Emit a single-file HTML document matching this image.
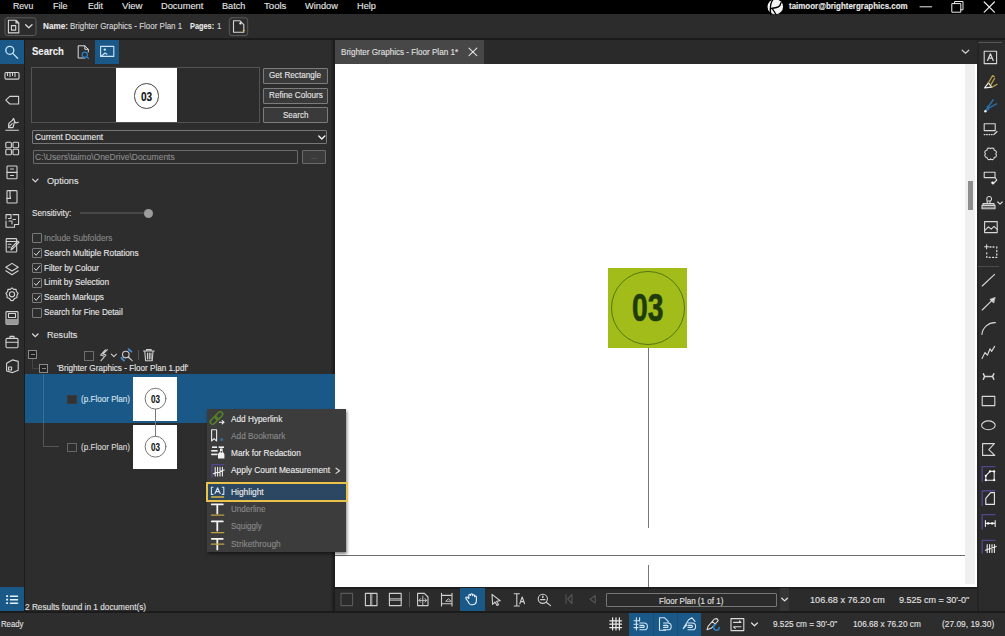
<!DOCTYPE html>
<html><head><meta charset="utf-8"><style>
html,body{margin:0;padding:0;}
body{width:1005px;height:636px;overflow:hidden;position:relative;background:#2b2b2b;font-family:"Liberation Sans", sans-serif;}
.t{position:absolute;white-space:pre;transform-origin:0 0;-webkit-text-stroke:0.12px currentColor;}
svg{overflow:visible;}
</style></head><body>
<div style="position:absolute;left:0px;top:0px;width:1005px;height:14px;background:#000;"></div>
<div style="position:absolute;left:0px;top:14px;width:1005px;height:24px;background:#2c2c2c;"></div>
<div style="position:absolute;left:0px;top:38px;width:1005px;height:2px;background:#1b1b1b;"></div>
<div style="position:absolute;left:0px;top:40px;width:24px;height:573px;background:#2b2b2b;"></div>
<div style="position:absolute;left:24px;top:40px;width:1px;height:573px;background:#1c1c1c;"></div>
<div style="position:absolute;left:25px;top:40px;width:306px;height:573px;background:#2d2d2d;"></div>
<div style="position:absolute;left:331px;top:40px;width:2px;height:573px;background:#262626;"></div>
<div style="position:absolute;left:333px;top:40px;width:2px;height:573px;background:#1d1d1d;"></div>
<div style="position:absolute;left:0px;top:40px;width:24px;height:24px;background:#1a5987;"></div>
<div style="position:absolute;left:0px;top:587px;width:24px;height:24px;background:#1a5987;"></div>
<div style="position:absolute;left:0px;top:611px;width:1005px;height:2px;background:#1b1b1b;"></div>
<div style="position:absolute;left:0px;top:613px;width:1005px;height:23px;background:#2d2d2d;"></div>
<div style="position:absolute;left:335px;top:40px;width:642px;height:24px;background:#2a2a2a;"></div>
<div style="position:absolute;left:335px;top:40px;width:149px;height:24px;background:#474747;"></div>
<div style="position:absolute;left:335px;top:64px;width:630px;height:523px;background:#ffffff;"></div>
<div style="position:absolute;left:965px;top:64px;width:10px;height:520px;background:#efefef;"></div>
<div style="position:absolute;left:975px;top:64px;width:2px;height:523px;background:#ffffff;"></div>
<div style="position:absolute;left:965px;top:584px;width:12px;height:3px;background:#ffffff;"></div>
<div style="position:absolute;left:968px;top:181px;width:5px;height:29px;background:#8e8e8e;"></div>
<div style="position:absolute;left:977px;top:40px;width:28px;height:571px;background:#2b2b2b;"></div>
<div style="position:absolute;left:977px;top:40px;width:2px;height:571px;background:#242424;"></div>
<div style="position:absolute;left:978px;top:42px;width:24px;height:1px;background:#555;"></div>
<div style="position:absolute;left:978px;top:266px;width:21px;height:1px;background:#4a4a4a;"></div>
<div style="position:absolute;left:335px;top:587px;width:642px;height:24px;background:#2b2b2b;"></div>
<div style="position:absolute;left:335px;top:587px;width:642px;height:2px;background:#1e1e1e;"></div>
<div style="position:absolute;left:460px;top:588px;width:25px;height:23px;background:#1a5987;"></div>
<div style="position:absolute;left:409px;top:592px;width:1px;height:15px;background:#555;"></div>
<div style="position:absolute;left:628.5px;top:613px;width:72px;height:23px;background:#1a5987;"></div>
<div style="position:absolute;left:653px;top:613px;width:1px;height:23px;background:#184d76;"></div>
<div style="position:absolute;left:677px;top:613px;width:1px;height:23px;background:#184d76;"></div>
<div class="t" style="left:12.5px;top:1.46px;font-size:9.5px;line-height:9.5px;font-weight:400;color:#e6e6e6;transform:scaleX(0.915);">Revu</div>
<div class="t" style="left:52.7px;top:1.46px;font-size:9.5px;line-height:9.5px;font-weight:400;color:#e6e6e6;transform:scaleX(0.953);">File</div>
<div class="t" style="left:87.6px;top:1.46px;font-size:9.5px;line-height:9.5px;font-weight:400;color:#e6e6e6;transform:scaleX(0.910);">Edit</div>
<div class="t" style="left:121.8px;top:1.46px;font-size:9.5px;line-height:9.5px;font-weight:400;color:#e6e6e6;transform:scaleX(1.004);">View</div>
<div class="t" style="left:160.7px;top:1.46px;font-size:9.5px;line-height:9.5px;font-weight:400;color:#e6e6e6;transform:scaleX(0.977);">Document</div>
<div class="t" style="left:221.6px;top:1.46px;font-size:9.5px;line-height:9.5px;font-weight:400;color:#e6e6e6;transform:scaleX(0.963);">Batch</div>
<div class="t" style="left:264.2px;top:1.46px;font-size:9.5px;line-height:9.5px;font-weight:400;color:#e6e6e6;transform:scaleX(1.010);">Tools</div>
<div class="t" style="left:305.2px;top:1.46px;font-size:9.5px;line-height:9.5px;font-weight:400;color:#e6e6e6;transform:scaleX(0.971);">Window</div>
<div class="t" style="left:357.3px;top:1.46px;font-size:9.5px;line-height:9.5px;font-weight:400;color:#e6e6e6;transform:scaleX(0.967);">Help</div>
<div class="t" style="left:789.3px;top:1.46px;font-size:9.5px;line-height:9.5px;font-weight:700;color:#ececec;transform:scaleX(0.837);">taimoor@brightergraphics.com</div>
<div class="t" style="left:42.9px;top:21.14px;font-size:9.4px;line-height:9.4px;font-weight:700;color:#e8e8e8;transform:scaleX(0.872);">Name:</div>
<div class="t" style="left:69.8px;top:21.14px;font-size:9.4px;line-height:9.4px;font-weight:400;color:#d8d8d8;transform:scaleX(0.851);">Brighter Graphics - Floor Plan 1</div>
<div class="t" style="left:190.4px;top:21.14px;font-size:9.4px;line-height:9.4px;font-weight:700;color:#e8e8e8;transform:scaleX(0.784);">Pages:</div>
<div class="t" style="left:217.0px;top:21.14px;font-size:9.4px;line-height:9.4px;font-weight:400;color:#d8d8d8;transform:scaleX(0.843);">1</div>
<div class="t" style="left:341.2px;top:46.96px;font-size:9.5px;line-height:9.5px;font-weight:400;color:#e0e0e0;transform:scaleX(0.853);">Brighter Graphics - Floor Plan 1*</div>
<div class="t" style="left:31.8px;top:47.03px;font-size:10px;line-height:10px;font-weight:700;color:#f0f0f0;transform:scaleX(0.953);">Search</div>
<div style="position:absolute;left:95px;top:40px;width:24px;height:24px;background:#1a5987;"></div>
<div style="position:absolute;left:31px;top:67px;width:229px;height:56px;background:#2c2c2c;box-sizing:border-box;border:1px solid #525252;"></div>
<div style="position:absolute;left:116px;top:68px;width:61px;height:54px;background:#ffffff;"></div>
<div style="position:absolute;left:263px;top:68px;width:65px;height:16px;background:#3a3a3a;box-sizing:border-box;border:1px solid #7c7c7c;border-radius:1px;"></div>
<div style="position:absolute;left:263px;top:88px;width:65px;height:16px;background:#3a3a3a;box-sizing:border-box;border:1px solid #7c7c7c;border-radius:1px;"></div>
<div style="position:absolute;left:263px;top:107px;width:65px;height:16px;background:#3a3a3a;box-sizing:border-box;border:1px solid #7c7c7c;border-radius:1px;"></div>
<div class="t" style="left:269.3px;top:70.34px;font-size:9.4px;line-height:9.4px;font-weight:400;color:#e6e6e6;transform:scaleX(0.869);">Get Rectangle</div>
<div class="t" style="left:268.5px;top:90.24px;font-size:9.4px;line-height:9.4px;font-weight:400;color:#e6e6e6;transform:scaleX(0.869);">Refine Colours</div>
<div class="t" style="left:282.5px;top:109.64px;font-size:9.4px;line-height:9.4px;font-weight:400;color:#e6e6e6;transform:scaleX(0.855);">Search</div>
<div style="position:absolute;left:32px;top:130px;width:295px;height:14px;background:#2e2e2e;box-sizing:border-box;border:1px solid #767676;border-radius:1px;"></div>
<div class="t" style="left:34.9px;top:132.34px;font-size:9.4px;line-height:9.4px;font-weight:400;color:#eaeaea;transform:scaleX(0.889);">Current Document</div>
<div style="position:absolute;left:33px;top:150px;width:265px;height:14px;background:#2e2e2e;box-sizing:border-box;border:1px solid #6a6a6a;border-radius:1px;"></div>
<div class="t" style="left:35.0px;top:151.84px;font-size:9.4px;line-height:9.4px;font-weight:400;color:#8c8c8c;transform:scaleX(0.906);">C:\Users\taimo\OneDrive\Documents</div>
<div style="position:absolute;left:302px;top:150px;width:24px;height:14px;background:#3b3b3b;box-sizing:border-box;border:1px solid #6a6a6a;border-radius:1px;"></div>
<div class="t" style="left:311.0px;top:152.73px;font-size:8px;line-height:8px;font-weight:400;color:#777;transform:scaleX(0.899);">...</div>
<div class="t" style="left:46.5px;top:175.87px;font-size:9.6px;line-height:9.6px;font-weight:400;color:#e0e0e0;transform:scaleX(0.952);">Options</div>
<div class="t" style="left:31.7px;top:208.24px;font-size:9.4px;line-height:9.4px;font-weight:400;color:#e4e4e4;transform:scaleX(0.877);">Sensitivity:</div>
<div style="position:absolute;left:80px;top:212px;width:67px;height:2px;background:#474747;"></div>
<div style="position:absolute;left:144px;top:209px;width:9px;height:9px;border-radius:50%;background:#9c9c9c"></div>
<div class="t" style="left:43.6px;top:232.84px;font-size:9.4px;line-height:9.4px;font-weight:400;color:#8a8a8a;transform:scaleX(0.880);">Include Subfolders</div>
<div style="position:absolute;left:32px;top:233px;width:10px;height:10px;background:transparent;box-sizing:border-box;border:1px solid #7a7a7a;border-radius:1px;"></div>
<div class="t" style="left:43.6px;top:247.84px;font-size:9.4px;line-height:9.4px;font-weight:400;color:#e8e8e8;transform:scaleX(0.886);">Search Multiple Rotations</div>
<div style="position:absolute;left:32px;top:248px;width:10px;height:10px;background:transparent;box-sizing:border-box;border:1px solid #7a7a7a;border-radius:1px;"></div>
<svg style="position:absolute;left:32px;top:248px;" width="10" height="10" viewBox="0 0 10 10" fill="none"><path d="M2.2 5.2 L4.2 7.3 L8 2.6" stroke="#dcdcdc" stroke-width="1"/></svg>
<div class="t" style="left:43.6px;top:262.74px;font-size:9.4px;line-height:9.4px;font-weight:400;color:#e8e8e8;transform:scaleX(0.865);">Filter by Colour</div>
<div style="position:absolute;left:32px;top:263px;width:10px;height:10px;background:transparent;box-sizing:border-box;border:1px solid #7a7a7a;border-radius:1px;"></div>
<svg style="position:absolute;left:32px;top:263px;" width="10" height="10" viewBox="0 0 10 10" fill="none"><path d="M2.2 5.2 L4.2 7.3 L8 2.6" stroke="#dcdcdc" stroke-width="1"/></svg>
<div class="t" style="left:43.6px;top:277.44px;font-size:9.4px;line-height:9.4px;font-weight:400;color:#e8e8e8;transform:scaleX(0.886);">Limit by Selection</div>
<div style="position:absolute;left:32px;top:278px;width:10px;height:10px;background:transparent;box-sizing:border-box;border:1px solid #7a7a7a;border-radius:1px;"></div>
<svg style="position:absolute;left:32px;top:278px;" width="10" height="10" viewBox="0 0 10 10" fill="none"><path d="M2.2 5.2 L4.2 7.3 L8 2.6" stroke="#dcdcdc" stroke-width="1"/></svg>
<div class="t" style="left:43.6px;top:292.14px;font-size:9.4px;line-height:9.4px;font-weight:400;color:#e8e8e8;transform:scaleX(0.877);">Search Markups</div>
<div style="position:absolute;left:32px;top:293px;width:10px;height:10px;background:transparent;box-sizing:border-box;border:1px solid #7a7a7a;border-radius:1px;"></div>
<svg style="position:absolute;left:32px;top:293px;" width="10" height="10" viewBox="0 0 10 10" fill="none"><path d="M2.2 5.2 L4.2 7.3 L8 2.6" stroke="#dcdcdc" stroke-width="1"/></svg>
<div class="t" style="left:43.6px;top:307.14px;font-size:9.4px;line-height:9.4px;font-weight:400;color:#e8e8e8;transform:scaleX(0.868);">Search for Fine Detail</div>
<div style="position:absolute;left:32px;top:308px;width:10px;height:10px;background:transparent;box-sizing:border-box;border:1px solid #7a7a7a;border-radius:1px;"></div>
<div class="t" style="left:46.5px;top:330.47px;font-size:9.6px;line-height:9.6px;font-weight:400;color:#e0e0e0;transform:scaleX(0.947);">Results</div>
<div style="position:absolute;left:28px;top:350px;width:9px;height:9px;background:#222;box-sizing:border-box;border:1px solid #8a8a8a;"></div>
<div style="position:absolute;left:30.5px;top:354px;width:4px;height:1px;background:#8a8a8a;"></div>
<div style="position:absolute;left:39px;top:364px;width:9px;height:9px;background:#222;box-sizing:border-box;border:1px solid #8a8a8a;"></div>
<div style="position:absolute;left:41.5px;top:368px;width:4px;height:1px;background:#8a8a8a;"></div>
<div style="position:absolute;left:32px;top:359px;width:1px;height:9px;background:#454545;"></div>
<div style="position:absolute;left:32px;top:368px;width:7px;height:1px;background:#454545;"></div>
<div style="position:absolute;left:84px;top:351px;width:10px;height:10px;background:transparent;box-sizing:border-box;border:1px solid #6e6e6e;"></div>
<div style="position:absolute;left:138px;top:350px;width:1px;height:10px;background:#555;"></div>
<div class="t" style="left:56.8px;top:362.64px;font-size:9.4px;line-height:9.4px;font-weight:400;color:#e6e6e6;transform:scaleX(0.869);">'Brighter Graphics - Floor Plan 1.pdf'</div>
<div style="position:absolute;left:25px;top:374px;width:310px;height:49px;background:#1a5987;"></div>
<div style="position:absolute;left:43px;top:374px;width:1px;height:49px;background:#3a6e96;"></div>
<div style="position:absolute;left:133px;top:377px;width:44px;height:44px;background:#ffffff;"></div>
<div style="position:absolute;left:133px;top:425px;width:44px;height:44px;background:#ffffff;"></div>
<div style="position:absolute;left:43px;top:423px;width:1px;height:24px;background:#555;"></div>
<div style="position:absolute;left:44px;top:446px;width:15px;height:1px;background:#555;"></div>
<div style="position:absolute;left:67px;top:395px;width:10px;height:9px;background:#333333;box-sizing:border-box;border:1px solid #3a3a3a;"></div>
<div style="position:absolute;left:67px;top:443px;width:10px;height:9px;background:transparent;box-sizing:border-box;border:1px solid #666;"></div>
<div class="t" style="left:80.6px;top:394.44px;font-size:9.4px;line-height:9.4px;font-weight:400;color:#d6e4f0;transform:scaleX(0.864);">(p.Floor Plan)</div>
<div class="t" style="left:80.6px;top:442.44px;font-size:9.4px;line-height:9.4px;font-weight:400;color:#dcdcdc;transform:scaleX(0.864);">(p.Floor Plan)</div>
<div class="t" style="left:24.9px;top:601.74px;font-size:9.4px;line-height:9.4px;font-weight:400;color:#e0e0e0;transform:scaleX(0.880);">2 Results found in 1 document(s)</div>
<div class="t" style="left:1.0px;top:619.44px;font-size:9.4px;line-height:9.4px;font-weight:400;color:#e0e0e0;transform:scaleX(0.830);">Ready</div>
<div style="position:absolute;left:606px;top:593px;width:171px;height:14px;background:#2b2b2b;box-sizing:border-box;border:1px solid #777;border-radius:1px;"></div>
<div class="t" style="left:658.7px;top:595.54px;font-size:9.4px;line-height:9.4px;font-weight:400;color:#e4e4e4;transform:scaleX(0.857);">Floor Plan (1 of 1)</div>
<div style="position:absolute;left:780px;top:588px;width:9px;height:23px;background:#353535;"></div>
<div class="t" style="left:810.0px;top:595.61px;font-size:9.2px;line-height:9.2px;font-weight:400;color:#e4e4e4;transform:scaleX(0.991);">106.68 x 76.20 cm</div>
<div class="t" style="left:899.0px;top:595.61px;font-size:9.2px;line-height:9.2px;font-weight:400;color:#e4e4e4;transform:scaleX(0.981);">9.525 cm = 30'-0"</div>
<div class="t" style="left:773.4px;top:620.21px;font-size:9.2px;line-height:9.2px;font-weight:400;color:#e4e4e4;transform:scaleX(0.896);">9.525 cm = 30'-0"</div>
<div class="t" style="left:852.7px;top:620.21px;font-size:9.2px;line-height:9.2px;font-weight:400;color:#e4e4e4;transform:scaleX(0.897);">106.68 x 76.20 cm</div>
<div class="t" style="left:942.4px;top:620.21px;font-size:9.2px;line-height:9.2px;font-weight:400;color:#e4e4e4;transform:scaleX(0.912);">(27.09, 19.30)</div>
<div style="position:absolute;left:335px;top:555px;width:630px;height:1px;background:#6a6a6a;"></div>
<div style="position:absolute;left:648px;top:348px;width:1px;height:180px;background:#777;"></div>
<div style="position:absolute;left:648px;top:565px;width:1px;height:22px;background:#777;"></div>
<div style="position:absolute;left:608px;top:268px;width:79px;height:80px;background:#a2bd19;"></div>
<div style="position:absolute;left:611.3px;top:270.5px;width:74px;height:74px;border-radius:50%;box-sizing:border-box;border:1px solid #557514"></div>
<div style="position:absolute;left:207px;top:409px;width:139px;height:143px;background:#3c3c3c;box-shadow:1px 2px 3px rgba(0,0,0,.5);"></div>
<div style="position:absolute;left:206px;top:482px;width:142px;height:20px;background:#2b4761;box-sizing:border-box;border:2px solid #e9c24b;"></div>
<div class="t" style="left:231.0px;top:414.04px;font-size:9.4px;line-height:9.4px;font-weight:400;color:#ececec;transform:scaleX(0.879);">Add Hyperlink</div>
<div class="t" style="left:231.0px;top:431.14px;font-size:9.4px;line-height:9.4px;font-weight:400;color:#8a8a8a;transform:scaleX(0.883);">Add Bookmark</div>
<div class="t" style="left:231.0px;top:448.14px;font-size:9.4px;line-height:9.4px;font-weight:400;color:#ececec;transform:scaleX(0.881);">Mark for Redaction</div>
<div class="t" style="left:231.0px;top:465.44px;font-size:9.4px;line-height:9.4px;font-weight:400;color:#ececec;transform:scaleX(0.892);">Apply Count Measurement</div>
<div class="t" style="left:231.0px;top:487.24px;font-size:9.4px;line-height:9.4px;font-weight:400;color:#ececec;transform:scaleX(0.896);">Highlight</div>
<div class="t" style="left:231.0px;top:504.04px;font-size:9.4px;line-height:9.4px;font-weight:400;color:#8a8a8a;transform:scaleX(0.859);">Underline</div>
<div class="t" style="left:231.0px;top:521.04px;font-size:9.4px;line-height:9.4px;font-weight:400;color:#8a8a8a;transform:scaleX(0.859);">Squiggly</div>
<div class="t" style="left:231.0px;top:539.04px;font-size:9.4px;line-height:9.4px;font-weight:400;color:#8a8a8a;transform:scaleX(0.891);">Strikethrough</div>
<svg style="position:absolute;left:0;top:0" width="1005" height="636" viewBox="0 0 1005 636" fill="none" stroke-linecap="round" stroke-linejoin="round">
<g stroke="#c9e4f8" stroke-width="1.3"><circle cx="9.8" cy="50.3" r="4"/><path d="M12.8 53.4 L17.6 58.2"/></g>
<g stroke="#d4d4d4" stroke-width="1.1">
<rect x="5" y="72.5" width="14" height="6.6" rx="1"/>
<path d="M7.5 72.5 V75.5 M10 72.5 V76.5 M12.5 72.5 V75.5 M15 72.5 V76.5"/>
<path d="M5.8 100.2 L9.8 96.4 H18.6 V104 H9.8 Z"/>
<path d="M5.8 130.3 H18.4"/>
<path d="M8.6 127.6 L8.8 123.4 L12.4 120.4 L13.6 118.4 L14.6 121.4 L13 127.6 Z M14.6 121.4 L15.8 123 L18.2 122.2 M9.8 126.2 L12.2 123.6" stroke-width="1.2"/>
<rect x="5.8" y="142.2" width="5.6" height="5.6" rx="1"/><rect x="13" y="142.2" width="5.6" height="5.6" rx="1"/>
<rect x="5.8" y="149.2" width="5.6" height="5.6" rx="1"/><rect x="13" y="149.2" width="5.6" height="5.6" rx="1"/>
<rect x="7" y="166" width="10" height="12.8" rx="0.8"/><path d="M7 172.4 H17 M10.5 169 H13.5 M10.5 175.5 H13.5"/>
<rect x="7" y="190.6" width="10" height="12.4" rx="0.8"/><path d="M10 190.6 V196.8 M7 198.4 H10.5 L10.5 197"/>
<path d="M6 214.6 H11 M13 214.6 H18.6 V224.5 M18.6 224.5 H14.5 V227.2 H6 V221 M6 219 V214.6 M11 214.6 V218.5 H8.5 M13 219.5 H15.5 M9 221 H12 V224"/>
<rect x="6.2" y="238.6" width="10.5" height="13.4" rx="0.8"/><path d="M6.2 241.5 H16.7 M8.2 244.3 H11 M8.2 247 H10"/><path d="M11 250 L12 247 L17.8 241.2 L19 242.4 L13.2 248.2 Z"/>
<path d="M5.8 267.2 L12 263.4 L18.2 267.2 L12 271 Z M5.8 270.8 L12 274.8 L18.2 270.8"/>
<path d="M12 287.8 L13.7 289.4 L16 289.2 L16.4 291.6 L18.2 293.3 L16.9 295.4 L17 297.6 L14.6 298.4 L13.2 300.4 L12 300.6 L10.8 300.4 L9.4 298.4 L7 297.6 L7.1 295.4 L5.8 293.3 L7.6 291.6 L8 289.2 L10.3 289.4 Z"/><circle cx="12" cy="294.3" r="2.6"/>
<rect x="6" y="311.6" width="12" height="12.6" rx="0.8"/><rect x="8.5" y="313.5" width="7" height="4"/>
<path d="M10 338.4 V336.4 H14 V338.4"/><rect x="6" y="338.4" width="12" height="9.4" rx="1.2"/><path d="M6 342.2 H18"/>
<path d="M6.6 363.2 L12.4 359.9 L18.2 361.4 V370.2 L12.6 372.6 L6.6 371 Z"/><rect x="8.6" y="367" width="3" height="3"/>
</g>
<rect x="6" y="319" width="12" height="5.2" fill="#9a9a9a"/>
<g stroke="#e6f2fb" stroke-width="1.4"><path d="M10.4 596.2 H17.6 M10.4 599.7 H17.6 M10.4 603.2 H17.6"/><path d="M7 596.2 H7.2 M7 599.7 H7.2 M7 603.2 H7.2" stroke-width="1.7" stroke-linecap="square"/></g>
</svg>
<svg style="position:absolute;left:0;top:0" width="1005" height="636" viewBox="0 0 1005 636" fill="none" stroke-linecap="round" stroke-linejoin="round">
<rect x="5" y="17.8" width="31" height="17.7" rx="2.5" stroke="#5c5c5c" stroke-width="1"/>
<g stroke="#d8d8d8" stroke-width="1.1">
<path d="M8.4 20.2 H16 L18.8 23 V32.9 H8.4 Z M16 20.2 V23 H18.8"/><rect x="11.4" y="25.6" width="4.3" height="4.5"/>
<path d="M25.6 24.8 L28.8 27.8 L32 24.8" stroke-width="1.3"/>
</g>
<rect x="229.3" y="17.8" width="18.4" height="17.8" rx="2.5" stroke="#5c5c5c" stroke-width="1"/>
<g stroke="#d8d8d8" stroke-width="1.1"><path d="M233.5 20.8 H240 L243.8 24.6 V32.2 H233.5 Z"/></g>
<circle cx="240.4" cy="23.4" r="1.1" fill="#fff"/>
<path d="M242.5 30.5 L243.8 29.2 L245 30.5 L243.8 31.6 Z" fill="#e2b93b"/>
</svg>
<svg style="position:absolute;left:0;top:0" width="1005" height="636" viewBox="0 0 1005 636" fill="none" stroke-linecap="round" stroke-linejoin="round">
<g stroke="#eaeaea" stroke-width="1"><path d="M920 6.8 H931.6"/>
<rect x="952.2" y="3.6" width="8.6" height="8.6"/><path d="M954.6 3.6 V1.5 H963 V9.8 H960.8"/>
<path d="M984.2 2 L994.4 12.2 M994.4 2 L984.2 12.2" stroke-width="1.2"/></g>
<ellipse cx="775.3" cy="6.8" rx="7.8" ry="7.4" fill="#f4f4f4"/>
<path d="M773 -0.5 C770.6 2.5 769.6 7 770.8 14.5 M771 8.6 C774.5 7.4 779.8 8.8 781 2.6 M772.6 9 L776 14.5" stroke="#000" stroke-width="1.4" fill="none"/>
</svg>
<svg style="position:absolute;left:0;top:0" width="1005" height="636" viewBox="0 0 1005 636" fill="none" stroke-linecap="round" stroke-linejoin="round">
<path d="M469 48.2 L476.8 55.6 M476.8 48.2 L469 55.6" stroke="#e0e0e0" stroke-width="1.1"/>
<path d="M962.2 50.2 L965.5 53.2 L968.8 50.2" stroke="#cfcfcf" stroke-width="1.2"/>
</svg>
<svg style="position:absolute;left:0;top:0" width="1005" height="636" viewBox="0 0 1005 636" fill="none" stroke-linecap="round" stroke-linejoin="round">
<g stroke="#dcdcdc" stroke-width="1"><path d="M85 58 H78.2 V45.8 H84.8 L88.3 49.3 V52 M84.8 45.8 V49.3 H88.3"/></g>
<g stroke="#2a80c8" stroke-width="1.2"><circle cx="84.8" cy="54.8" r="2.6"/><path d="M86.6 56.8 L88.6 58.6"/></g>
<g stroke="#cde3f5" stroke-width="1.1"><rect x="100.6" y="46.4" width="13.2" height="10" /><path d="M101.5 56 L105 53 L107 54.2"/></g>
<circle cx="104.8" cy="49.6" r="1.2" fill="#cde3f5"/>
<path d="M318.8 136 L321.8 139 L324.8 136" stroke="#f2f2f2" stroke-width="1.4"/>
<path d="M32.6 179.2 L35.3 181.9 L38 179.2" stroke="#e0e0e0" stroke-width="1.2"/>
<path d="M32.6 334 L35.3 336.7 L38 334" stroke="#e0e0e0" stroke-width="1.2"/>
</svg>
<div style="position:absolute;left:133.9px;top:83.3px;width:25.4px;height:25.4px;border-radius:50%;border:1px solid #444;box-sizing:border-box;background:#fff"></div>
<div class="t" style="left:141.0px;top:89.69px;font-size:13px;line-height:13px;font-weight:700;color:#111;transform:scaleX(0.774);">03</div>
<svg style="position:absolute;left:0;top:0" width="1005" height="636" viewBox="0 0 1005 636" fill="none" stroke-linecap="round" stroke-linejoin="round">
<g stroke="#cfcfcf" stroke-width="1.1">
<path d="M107.4 349.6 L103 354 L106 355 L101 360.6 M105.4 349.8 L100.6 355 L103.6 356"/>
<path d="M111.4 354.2 L113.9 356.6 L116.4 354.2"/>
<circle cx="125.8" cy="354.6" r="3.3"/><path d="M128.2 357 L132.2 360.6"/>
<path d="M143.5 351 H154.2 M146.5 351 V349.6 H151.2 V351 M144.8 351.5 L145.6 360.8 H152.2 L153 351.5 M147.5 353 V359 M149.3 353 V359 M151 353 V359"/>
</g>
<path d="M128.6 349.2 L131.4 351.6 M121.4 358 L124 360.6" stroke="#3a8fd8" stroke-width="1.8"/>
</svg>
<svg style="position:absolute;left:0;top:0" width="1005" height="636" viewBox="0 0 1005 636" fill="none" stroke-linecap="round" stroke-linejoin="round">
<path d="M155.5 409 V436.4" stroke="#777" stroke-width="1"/>
<circle cx="155.5" cy="398.7" r="10.4" fill="#fff" stroke="#555" stroke-width="0.8"/>
<circle cx="155.5" cy="446.7" r="10.4" fill="#fff" stroke="#555" stroke-width="0.8"/>
</svg>
<div class="t" style="left:150.9px;top:393.71px;font-size:10.5px;line-height:10.5px;font-weight:700;color:#111;transform:scaleX(0.770);">03</div>
<div class="t" style="left:150.9px;top:441.71px;font-size:10.5px;line-height:10.5px;font-weight:700;color:#111;transform:scaleX(0.770);">03</div>
<svg style="position:absolute;left:0;top:0" width="1005" height="636" viewBox="0 0 1005 636" fill="none" stroke-linecap="round" stroke-linejoin="round">
<rect x="341" y="593.4" width="11.6" height="12.2" stroke="#5a5a5a" stroke-width="1.1"/>
<g stroke="#d0d0d0" stroke-width="1.1">
<rect x="365.4" y="593.4" width="11.6" height="12.2"/><path d="M370.6 593.4 V605.6 M371.8 593.4 V605.6" stroke-width="0.8"/>
<rect x="389.4" y="593.4" width="11.8" height="12.2"/><path d="M389.4 598.8 H401.2 M389.4 600.2 H401.2" stroke-width="0.9"/>
<path d="M417.6 593.4 H424.4 L428 597 V605.6 H417.6 Z"/><path d="M422.8 596 V605 M419 600.4 H426.5 M420.5 598.6 L419 600.4 L420.5 602.2 M425 598.6 L426.5 600.4 L425 602.2" stroke-width="0.9"/>
<path d="M441.5 593.2 V606 M452 593.2 V606 M441.5 595.4 H452 M441.5 603.8 H452"/><path d="M446 601 L448.5 598.6 L450.8 601 Z" stroke-width="0.9"/>
<path d="M492 594.4 L500.2 600.8 L496.6 601.3 L498.6 604.8 L497 605.4 L495 602 L492.6 604.4 Z"/>
<path d="M514.2 593.8 H519.4 M516.8 593.8 V606 M514.2 606 H519.4 M519.8 603.8 L522.2 597 L524.6 603.8 M520.8 601.6 H523.6"/>
<circle cx="542.8" cy="598.8" r="4.6"/><path d="M546.2 602.2 L550.6 605.6 M540.6 599.6 H545"/><path d="M542.8 596.2 V597.6" stroke-width="1.4"/>
</g>
<g stroke="#eaf3fb" stroke-width="1.1">
<path d="M468.2 601.8 L466 598.6 C465.3 597.6 466.6 596.4 467.6 597.3 L468.8 598.5 V595.4 C468.8 594.2 470.6 594.2 470.6 595.4 V594.7 C470.6 593.4 472.6 593.4 472.6 594.7 V595.6 C472.6 594.4 474.6 594.4 474.6 595.6 V596.8 C474.6 595.8 476.4 595.8 476.4 596.8 V600.6 C476.4 603.2 474.4 604.8 472 604.8 H470.8 C469.6 604.8 468.8 603.2 468.2 601.8 Z"/>
</g>
<g stroke="#555" stroke-width="1.1"><path d="M566 594.5 V603.5 M572 594.5 L567.8 599 L572 603.5 Z M595.3 595.5 L590 599.2 L595.3 603 Z"/></g>
<path d="M781.8 598.2 L784.6 600.9 L787.4 598.2" stroke="#e0e0e0" stroke-width="1.3"/>
</svg>
<svg style="position:absolute;left:0;top:0" width="1005" height="636" viewBox="0 0 1005 636" fill="none" stroke-linecap="round" stroke-linejoin="round">
<g stroke="#e8e8e8" stroke-width="1.2">
<path d="M609.8 620.8 H621.6 M609.8 624.2 H621.6 M609.8 627.6 H621.6 M612.6 617.8 V630 M616 617.8 V630 M619.4 617.8 V630"/>
</g>
<g stroke="#d2e6f6" stroke-width="1.1">
<path d="M634 620.8 H639 M634 624.2 H638 M634 627.6 H638 M636.4 617.8 V630 M639.6 617.8 V621"/>
<path d="M639.8 623 H644 A3.4 3.4 0 0 1 644 629.8 H639.8 M639.8 625.4 H643.6 A1.1 1.1 0 0 1 643.6 627.4 H639.8"/>
<path d="M665.6 630.2 H659.5 V617.8 H664.6 L668.2 621.4 V622.2"/>
<path d="M663.6 623 H667.8 A3.4 3.4 0 0 1 667.8 629.8 H663.6 M663.6 625.4 H667.4 A1.1 1.1 0 0 1 667.4 627.4 H663.6"/>
<path d="M683.2 628.6 L688.6 619.8 L692 617.8 L695 621.4 M683.2 628.6 L686.6 625"/>
<path d="M688 623 H692.2 A3.4 3.4 0 0 1 692.2 629.8 H688 M688 625.4 H691.8 A1.1 1.1 0 0 1 691.8 627.4 H688"/>
</g>
<g stroke="#dcdcdc" stroke-width="1.1">
<path d="M707 629.8 L708.2 626.2 L714.4 619 L717 618.6 L718.2 620.6 L711.6 628 Z M712.2 621.4 L715 623.8"/>
<rect x="731" y="618.6" width="12.8" height="12" /><path d="M733.6 622.4 H741 L739.4 620.8 M741 626.8 H733.6 L735.2 628.4"/>
<path d="M751.6 623 L754.5 625.8 L757.4 623" stroke-width="1.3"/>
</g>
<path d="M715.8 624.6 A2.8 2.8 0 1 0 719.2 627.6" stroke="#2a80c8" stroke-width="1.5"/>
</svg>
<svg style="position:absolute;left:0;top:0" width="1005" height="636" viewBox="0 0 1005 636" fill="none" stroke-linecap="round" stroke-linejoin="round">
<g stroke="#d8d8d8" stroke-width="1.1">
<rect x="984.2" y="51.2" width="12.4" height="12.4"/>
<path d="M987.6 60.4 L990.4 53.8 L993.2 60.4 M988.6 58.2 H992.2" stroke-width="1.3"/>
</g>
<path d="M984.6 87.8 L988.4 82.8 L991.8 87.2 Z" stroke="#ececec" stroke-width="1.2"/>
<path d="M988.4 82.8 L992.6 75.6 M990.8 84.8 L994.6 78.4 M991.8 87.2 L997 84.4 M992.6 75.6 L994.2 76.6" stroke="#b39b4a" stroke-width="1.3"/>
<path d="M985.8 110.2 L993.2 99.8 M987.8 108.6 L996.6 103.8 M985.8 110.2 L988.6 109.2 L987.2 106.4" stroke="#2b6da6" stroke-width="1.5"/>
<circle cx="985.4" cy="111.2" r="1.2" fill="#f0f0f0"/>
<g stroke="#d8d8d8" stroke-width="1.1">
<rect x="984.2" y="123.8" width="11" height="6.8"/>
<path d="M984.2 134.6 H985 M986.6 134.6 H987.4 M989 134.6 H989.8 M991.4 134.6 H992.2 M993.8 134.6 L995 133.4 L997 131.6" stroke-width="1.3"/>
<path d="M990.60 148.70 A2.05 2.05 0 0 1 994.21 150.19 A2.05 2.05 0 0 1 995.70 153.80 A2.05 2.05 0 0 1 994.21 157.41 A2.05 2.05 0 0 1 990.60 158.90 A2.05 2.05 0 0 1 986.99 157.41 A2.05 2.05 0 0 1 985.50 153.80 A2.05 2.05 0 0 1 986.99 150.19 A2.05 2.05 0 0 1 990.60 148.70 Z"/>
<rect x="984.2" y="172.2" width="10.8" height="5.4"/><path d="M995 177.6 L996.8 180 L993 184"/>
<path d="M982 205.4 H995 V208.8 H982 Z M983 205.4 V203.6 H994 V205.4 M987.2 203.6 V201 M990 203.6 V201 M986.8 199 A2.4 2.4 0 1 1 990.4 201 H987.2 A2.4 2.4 0 0 1 986.8 199"/><path d="M982.4 207.2 H994.6" stroke-width="0.8"/>
<path d="M997.8 202 L1000 204.2 L1002.2 202" stroke-width="1.2"/>
<rect x="984.6" y="221.6" width="12.6" height="11"/><path d="M984.6 230.6 L988.4 226.8 L991.2 229.2 L994 226.4 L997.2 229.4"/>
<path d="M984.6 246.8 H988.6 M986.6 244.8 V248.8"/>
<path d="M990 247 H991 M993 247 H994 M996.8 247 V248 M996.8 250.5 V251.5 M996.8 254 V255 M996.8 257.4 H995.8 M993.6 257.4 H992.6 M990.2 257.4 H989.2 M986.8 257.4 V256.4 M986.8 253.8 V252.8" stroke-width="1.3"/>
<path d="M982.2 286 L994.6 274.4"/>
<path d="M982.2 310 L992 300.4"/>
<path d="M981.9 334.4 A13 13 0 0 1 995.4 322.6"/>
<path d="M982 358.6 L985 352.6 L987.4 355.2 L990 348.8 L991.6 351.4 L994.6 346.4"/>
<path d="M984.6 376.5 H992.6 M983.4 373.8 L984.6 376.5 L983.4 379.2 M993.8 373.8 L992.6 376.5 L993.8 379.2" stroke-width="1.5"/>
<rect x="982.2" y="396.4" width="12.6" height="9.2"/>
<ellipse cx="988.4" cy="425.3" rx="6.8" ry="4.4"/>
<path d="M982.6 443.6 H994.4 L988.8 449.6 L994.8 455.4 H982.6 Z"/>
</g>
<path d="M994.8 297.6 L990 299.4 L993.4 302.8 Z" fill="#d8d8d8" stroke="#d8d8d8" stroke-width="0.8"/>
<circle cx="992.6" cy="182.8" r="1.4" fill="#f0f0f0"/>
<g stroke="#54468f" stroke-width="1.4" stroke-dasharray="1.2 0.8">
<path d="M982.2 481.2 V466.6 H995"/><path d="M982.2 505.4 V490.8 H995"/>
<path d="M982.2 529 V514.6 H995"/><path d="M982.2 553 V540.4 H995"/>
</g>
<g stroke="#e8e8e8" stroke-width="1.1">
<path d="M985.8 475.8 L990 471.4 H994.2 V480.2 H985.8 Z"/>
<path d="M985.8 498.4 L990.6 492.6 H994.4 V504.4 H985.8 Z"/>
<path d="M985.4 520.6 V526.4 M995.2 520.6 V526.4 M985.4 523.4 H995.2"/>
<path d="M987.2 544.6 V552.4 M989.6 544.6 V552.4 M992 544.6 V552.4 M994.4 544.6 V552.4 M985.4 550.2 L996.2 546.4"/>
</g>
<g fill="#ffffff"><circle cx="985.8" cy="475.8" r="1.1"/><circle cx="990" cy="471.4" r="1.1"/><circle cx="994.2" cy="471.4" r="1.1"/><circle cx="994.2" cy="480.2" r="1.1"/><circle cx="985.8" cy="480.2" r="1.1"/>
<circle cx="988.2" cy="523.4" r="1.2"/><circle cx="992.2" cy="523.4" r="1.2"/></g>
</svg>
<svg style="position:absolute;left:0;top:0" width="1005" height="636" viewBox="0 0 1005 636" fill="none" stroke-linecap="round" stroke-linejoin="round">
<g stroke="#55832a" stroke-width="1.5" transform="rotate(-45 216.5 418)">
<rect x="208.6" y="415.6" width="8.6" height="4.8" rx="2.4"/><rect x="215.6" y="415.6" width="8.6" height="4.8" rx="2.4"/>
</g>
<path d="M219.4 422.2 H224 M222.2 420.6 L224 422.2 L222.2 423.8" stroke="#f0f0f0" stroke-width="1.1"/>
<path d="M211.6 429.8 H216.6 V441 L214.1 438.6 L211.6 441 Z" stroke="#e8e8e8" stroke-width="1.1"/>
<circle cx="221.6" cy="439.6" r="1.5" fill="#2b6ea6"/>
<g fill="#f2f2f2">
<rect x="212" y="446.4" width="5" height="1.6"/><rect x="218.6" y="446.4" width="5.4" height="1.6"/>
<rect x="211.2" y="450" width="6.4" height="1.6"/><rect x="211.2" y="453.6" width="6.4" height="1.6"/>
<path d="M220 448.6 H222.6 V451.6 L224.4 454 V458.6 H218 V454 L220 451.6 Z"/>
</g>
<circle cx="221.3" cy="451.8" r="0.9" fill="#3c3c3c"/>
<g stroke="#54468f" stroke-width="1.4" stroke-dasharray="1.2 0.8"><path d="M212 477 V464.6 H224"/></g>
<path d="M215.2 467.4 V476 M217.6 467.4 V476 M220 467.4 V476 M222.4 467.4 V476 M213.4 473.8 L224.2 470" stroke="#ececec" stroke-width="1.1"/>
<path d="M336 468.2 L339.6 470.8 L336 473.4" stroke="#dcdcdc" stroke-width="1.1"/>
<g stroke="#d4e4f0" stroke-width="1.1"><path d="M213 487.2 H211.4 V494.4 H213 M222.2 487.2 H223.8 V494.4 H222.2 M215 493.4 L217.6 487.8 L220.2 493.4 M215.8 491.6 H219.4"/></g>
<path d="M211.6 497 H223.6" stroke="#d9b63e" stroke-width="1.4"/>
<g stroke="#f4f4f4" stroke-width="1.8"><path d="M211.8 504.4 H222.8 M217.3 504.4 V513.6 M211.8 521.4 H222.8 M217.3 521.4 V530.6 M211.8 538.8 H222.8 M217.3 538.8 V549.4"/></g>
<path d="M211.4 515.2 H223.8 M211.4 532.6 H223.8 M211.4 544.2 H223.8" stroke="#bfa040" stroke-width="1.2"/>
</svg>
<div class="t" style="left:631.8px;top:287.86px;font-size:39.5px;line-height:39.5px;font-weight:700;color:#1f3c0b;transform:scaleX(0.715);-webkit-text-stroke:0.7px currentColor;">03</div>
</body></html>
